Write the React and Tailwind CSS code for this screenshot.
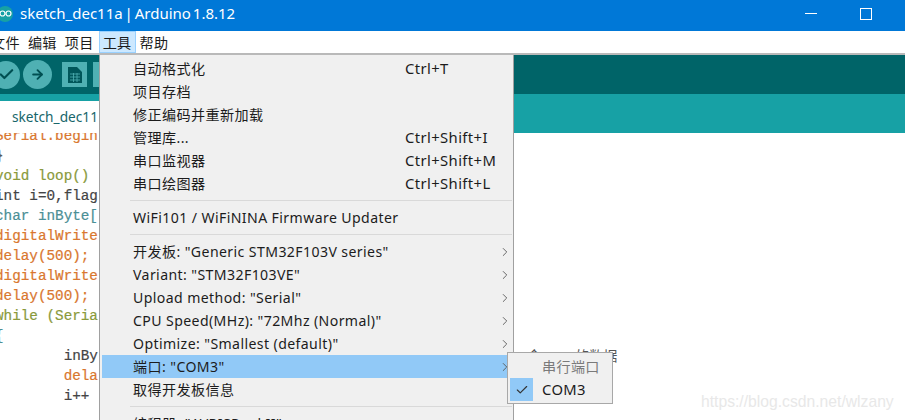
import { Check, ChevronRight, ArrowRight } from "lucide-react";

const FONT = "font-['Noto_Sans','Noto_Sans_CJK_SC',sans-serif]";

const codeLines = [
  { text: "Serial.begin", color: "text-[#d9772f]" },
  { text: "}", color: "text-[#555555]" },
  { text: "void loop()", color: "text-[#8a9a3c]" },
  { text: "int i=0,flag;", color: "text-[#444444]" },
  { text: "char inByte[", color: "text-[#4b8f95]" },
  { text: "digitalWrite", color: "text-[#d9772f]" },
  { text: "delay(500);", color: "text-[#d9772f]" },
  { text: "digitalWrite", color: "text-[#d9772f]" },
  { text: "delay(500);", color: "text-[#d9772f]" },
  { text: "while (Seria", color: "text-[#8a9a3c]" },
  { text: "{", color: "text-[#4b8f95]" },
  { text: "        inBy", color: "text-[#444444]" },
  { text: "        dela", color: "text-[#d9772f]" },
  { text: "        i++", color: "text-[#444444]" },
];

// one row of the tools menu
function MenuItem({ label, shortcut, arrow, active }) {
  return (
    <div className={`flex items-center h-[23px] pl-[31px] pr-[1px] ${active ? "bg-[#91c9f7]" : ""}`}>
      <span className="flex-1 whitespace-nowrap">{label}</span>
      {shortcut && <span className="w-[107px] whitespace-nowrap text-[14.800px]">{shortcut}</span>}
      {arrow && <ChevronRight size={14} strokeWidth={1.5} className="text-[#555555]" />}
    </div>
  );
}

function Separator() {
  return <div className="h-px bg-[#d9d9d9] ml-[28px] mr-[1px] my-[5px]" />;
}

export default function App() {
  return (
    <div className={`relative flex flex-col w-[905px] h-[420px] overflow-hidden bg-white text-[14.100px] text-[#1c1c1c] ${FONT}`}>
      {/* title bar */}
      <div className="flex items-center h-[31px] pb-[4px] bg-[#0078d7] text-white shrink-0">
        <div className="flex items-center justify-center w-[16px] h-[16px] -ml-[3px] mr-[7px] rounded-full bg-[#17a1a5]">
          <svg width="13" height="7" viewBox="0 0 13 7" fill="none" stroke="white" strokeWidth="1.2">
            <circle cx="3.5" cy="3.500" r="2.500" />
            <circle cx="9.5" cy="3.500" r="2.500" />
          </svg>
        </div>
        <span className="w-[785px] text-[15px] [word-spacing:-2px]">sketch_dec11a | Arduino 1.8.12</span>
        <div className="w-[12px] h-px bg-white" />
        <div className="w-[12px] h-[12px] ml-[43px] border border-white" />
      </div>

      {/* menu bar */}
      <div className="flex items-center h-[24px] border-b-2 border-[#b9b9b9] shrink-0 -ml-[13px] tracking-[0.35px]">
        <span className="px-[4px] pt-[2px]">文件</span>
        <span className="px-[4px] pt-[2px]">编辑</span>
        <span className="px-[4px] pt-[2px]">项目</span>
        <span className="px-[3px] pt-[2px] ml-[1px] h-[22px] flex items-center bg-[#cce8ff] border border-[#99d1ff]">工具</span>
        <span className="px-[4px] pt-[2px]">帮助</span>
      </div>

      {/* toolbar */}
      <div className="flex items-center gap-[3px] h-[39px] bg-[#006468] shrink-0 -ml-[8px]">
        <div className="flex items-center justify-center w-[28px] h-[28px] rounded-full bg-[#4fb0b3] text-[#004f52]">
          <Check size={17} strokeWidth={3} />
        </div>
        <div className="flex items-center justify-center w-[29px] h-[29px] rounded-full bg-[#4fb0b3] text-[#004f52]">
          <ArrowRight size={15} strokeWidth={3} />
        </div>
        <div className="flex items-center justify-center w-[25px] h-[25px] ml-[7px] bg-[#4fb0b3]">
          <svg width="14" height="16" viewBox="0 0 14 16" fill="#00565a">
            <path d="M0 0h9l5 5v11H0z" />
            <path d="M2 7h10M2 10h10M2 13h10M5.500 6v9M9 6v9" stroke="#4fb0b3" strokeWidth="0.8" />
          </svg>
        </div>
        <div className="w-[25px] h-[25px] ml-[3px] bg-[#4fb0b3]" />
      </div>

      {/* tab strip */}
      <div className="relative z-10 flex items-end h-[39px] bg-[#17a1a5] shrink-0">
        <div className="flex items-center h-[32px] w-[100px] pl-[12px] bg-white text-[#17666a] text-[13.700px]">
          <span className="w-[85px] whitespace-nowrap overflow-hidden">sketch_dec11a</span>
        </div>
      </div>

      {/* editor */}
      <div className="flex-1 font-['Liberation_Mono',monospace] text-[14.300px] leading-[20px] -mt-[7px] -ml-[5px] [-webkit-text-stroke:0.2px]">
        {codeLines.map((line, i) => (
          <div key={i} className={`whitespace-pre h-[20px] ${line.color}`}>
            {line.text}
          </div>
        ))}
      </div>

      {/* text under the open submenu */}
      <span className="absolute left-[527px] top-[345px] text-[#555555]">令</span>
      <span className="absolute left-[575px] top-[345px] text-[#555555]">的数据</span>

      {/* watermark */}
      <span className="absolute left-[701px] top-[392px] text-[15.700px] leading-[20px] text-[#e8e8e8] font-['Liberation_Sans',sans-serif]">
        https://blog.csdn.net/wlzany
      </span>

      {/* tools menu */}
      <div className="absolute z-20 left-[99px] top-[55px] w-[415px] h-[365px] pt-[2px] pl-[2px] bg-[#f0f0f0] border-l border-r border-[#a0a0a0] tracking-[0.4px]">
        <MenuItem label="自动格式化" shortcut="Ctrl+T" />
        <MenuItem label="项目存档" />
        <MenuItem label="修正编码并重新加载" />
        <MenuItem label="管理库..." shortcut="Ctrl+Shift+I" />
        <MenuItem label="串口监视器" shortcut="Ctrl+Shift+M" />
        <MenuItem label="串口绘图器" shortcut="Ctrl+Shift+L" />
        <Separator />
        <MenuItem label="WiFi101 / WiFiNINA Firmware Updater" />
        <Separator />
        <MenuItem label={'开发板: "Generic STM32F103V series"'} arrow />
        <MenuItem label={'Variant: "STM32F103VE"'} arrow />
        <MenuItem label={'Upload method: "Serial"'} arrow />
        <MenuItem label={'CPU Speed(MHz): "72Mhz (Normal)"'} arrow />
        <MenuItem label={'Optimize: "Smallest (default)"'} arrow />
        <MenuItem label={'端口: "COM3"'} arrow active />
        <MenuItem label="取得开发板信息" />
        <Separator />
        <MenuItem label="编程器: &quot;AVRISP mkII&quot;" />
      </div>

      {/* port submenu */}
      <div className="absolute z-30 left-[507px] top-[352px] w-[106px] h-[52px] p-[2px] bg-[#f0f0f0] border border-[#a8a8a8] tracking-[0.35px]">
        <div className="flex items-center h-[23px] pl-[32px] text-[#7a7a7a]">串行端口</div>
        <div className="flex items-center h-[23px]">
          <span className="flex items-center justify-center w-[23px] h-[23px] bg-[#91c9f7]">
            <Check size={14} strokeWidth={2} className="text-[#333333]" />
          </span>
          <span className="ml-[9px] text-[14.800px]">COM3</span>
        </div>
      </div>
    </div>
  );
}
